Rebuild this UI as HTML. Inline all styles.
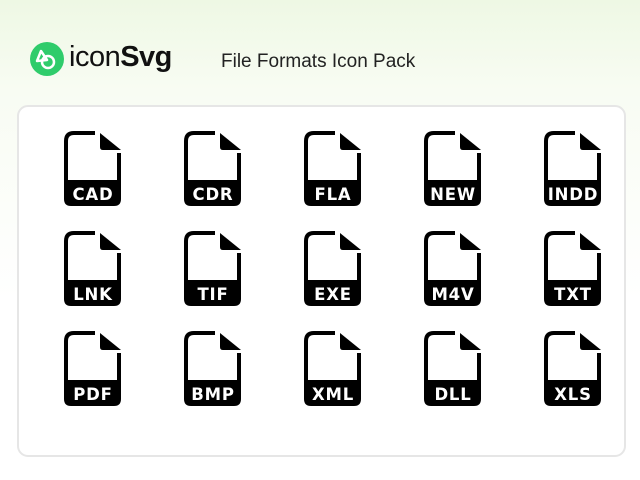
<!DOCTYPE html>
<html><head><meta charset="utf-8"><style>
body{margin:0;width:640px;height:480px;overflow:hidden;background:linear-gradient(#eef8e4 0,#f8fcf3 90px,#fff 300px);font-family:"Liberation Sans",sans-serif;position:relative}
.card{position:absolute;left:17px;top:105px;width:605px;height:348px;border:2px solid #e6e6e6;border-radius:11px;background:#fff}
</style></head><body>
<svg style="position:absolute;left:30px;top:42px" width="34" height="34" viewBox="0 0 34 34"><circle cx="17" cy="17" r="17" fill="#2fcc6b"/><path d="M11 9 L17 18 L7 19 Z" fill="none" stroke="#fff" stroke-width="2.5" stroke-linejoin="round"/><circle cx="18" cy="20" r="6" fill="none" stroke="#fff" stroke-width="2.5"/></svg>
<div style="position:absolute;left:69px;top:41px;font-size:29px;color:#111;letter-spacing:-0.5px">icon<b>Svg</b></div>
<div style="position:absolute;left:221px;top:51px;font-size:19px;color:#222">File Formats Icon Pack</div>
<div class="card"></div>
<svg width="640" height="480" style="position:absolute;left:0;top:0">
<defs><g id="f">
<path d="M2,52 V10 Q2,2 10,2 H31" fill="none" stroke="#000" stroke-width="4"/>
<path d="M55,22 V52" fill="none" stroke="#000" stroke-width="4"/>
<path d="M36,2 L57,19 L39,19 Q36,19 36,16 Z" fill="#000"/>
<path d="M0,49 H57 V68 Q57,75 50,75 H7 Q0,75 0,68 Z" fill="#000"/>
</g></defs>
<g font-family="DejaVu Sans" font-weight="bold" font-size="16.5" fill="#fff" text-anchor="middle" letter-spacing="0.8">
<use href="#f" x="64" y="131"/><text x="93" y="200">CAD</text>
<use href="#f" x="184" y="131"/><text x="213" y="200">CDR</text>
<use href="#f" x="304" y="131"/><text x="333" y="200">FLA</text>
<use href="#f" x="424" y="131"/><text x="453" y="200">NEW</text>
<use href="#f" x="544" y="131"/><text x="573" y="200">INDD</text>
<use href="#f" x="64" y="231"/><text x="93" y="300">LNK</text>
<use href="#f" x="184" y="231"/><text x="213" y="300">TIF</text>
<use href="#f" x="304" y="231"/><text x="333" y="300">EXE</text>
<use href="#f" x="424" y="231"/><text x="453" y="300">M4V</text>
<use href="#f" x="544" y="231"/><text x="573" y="300">TXT</text>
<use href="#f" x="64" y="331"/><text x="93" y="400">PDF</text>
<use href="#f" x="184" y="331"/><text x="213" y="400">BMP</text>
<use href="#f" x="304" y="331"/><text x="333" y="400">XML</text>
<use href="#f" x="424" y="331"/><text x="453" y="400">DLL</text>
<use href="#f" x="544" y="331"/><text x="573" y="400">XLS</text>
</g></svg>
</body></html>
